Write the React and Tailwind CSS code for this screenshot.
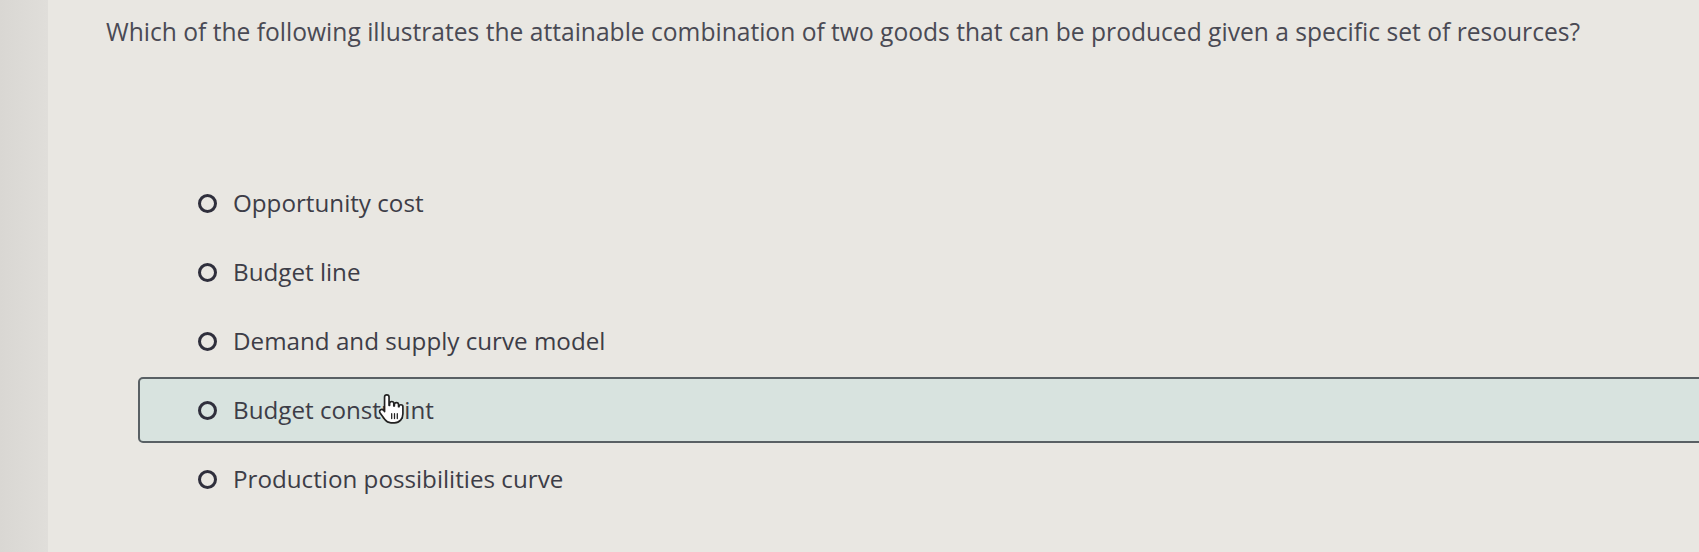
import React from "react";

const options = [
  "Opportunity cost",
  "Budget line",
  "Demand and supply curve model",
  "Budget constraint",
  "Production possibilities curve",
];

function HandCursor() {
  return (
    <svg width="28" height="35" viewBox="0 0 20 24" className="absolute left-[144px] top-[-6px]">
      <path
        d="M7 1.5c1 0 1.6.7 1.6 1.6V9h.4V7.8c0-.9.7-1.5 1.5-1.5s1.5.6 1.5 1.5V9.5h.4V8.6c0-.9.7-1.5 1.5-1.5s1.5.6 1.5 1.5V10h.3c0-.8.7-1.4 1.4-1.4s1.4.6 1.4 1.4V15c0 3.5-2.3 6.5-6 6.5H10c-2 0-3.3-.8-4.4-2.3L2.2 14.5c-.6-.8-.4-1.8.3-2.3s1.7-.3 2.3.4L5.4 13.5V3.1C5.4 2.2 6 1.5 7 1.5z"
        fill="#fff"
        stroke="#222"
        strokeWidth="1.2"
        strokeLinejoin="round"
      />
      <path d="M10.5 15v3.5M12.5 15v3.5M14.5 15v3.5" stroke="#222" strokeWidth="0.9" strokeLinecap="round" />
    </svg>
  );
}

export default function App() {
  return (
    <div className="w-[1699px] h-[552px] overflow-hidden flex bg-[#e9e7e2]" style={{ fontFamily: "'Open Sans', Lato, sans-serif" }}>
      {/* screen edge */}
      <div className="w-[48px] shrink-0 bg-gradient-to-r from-[#d9d7d3] to-[#e0deda]" />

      <div className="flex-1 flex flex-col">
        <p className="pl-[58px] pt-[16px] text-[24.6px] leading-[32px] text-[#4a4a54] whitespace-nowrap">
          Which of the following illustrates the attainable combination of two goods that can be produced given a specific set of resources?
        </p>

        <div className="mt-[122px] flex flex-col gap-[3px] pl-[90px]">
          {options.map((opt, i) => {
            const selected = i === 3;
            return (
              <div
                key={opt}
                className={
                  selected
                    ? "relative -mr-6 h-[66px] flex items-center gap-[16px] pl-[58px] rounded-[5px] border-2 border-[#596064] bg-[#d8e3df]"
                    : "relative -mr-6 h-[66px] flex items-center gap-[16px] pl-[58px] rounded-[5px] border-2 border-transparent"
                }
              >
                <span className="w-[19px] h-[19px] shrink-0 rounded-full border-[3px] border-[#2f2f3c]" />
                <span className="relative text-[24.2px] leading-none text-[#3d3d47] whitespace-nowrap">
                  {opt}
                  {selected && <HandCursor />}
                </span>
              </div>
            );
          })}
        </div>
      </div>
    </div>
  );
}
